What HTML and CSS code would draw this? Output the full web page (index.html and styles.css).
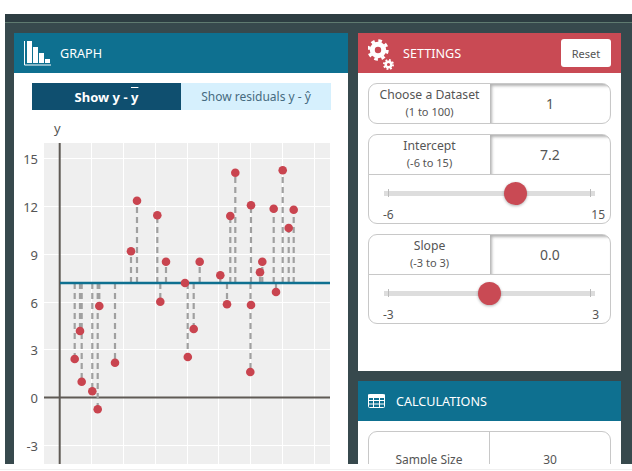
FILE: index.html
```html
<!DOCTYPE html>
<html lang="en">
<head>
    <meta charset="UTF-8">
    <meta name="viewport" content="width=device-width, initial-scale=1.0">
    <title>Regression Explorer</title>
    <link rel="stylesheet" href="styles.css">
</head>
<body>
    <div class="shell">
        <div class="topbar"></div>
        <div class="columns">
            <section class="panel graph-panel">
                <header class="panel-head">
                    <svg class="head-icon" width="27" height="25" viewBox="0 0 27 25">
                        <path d="M0.5 0V24H27" fill="none" stroke="#fff" stroke-width="1"/>
                        <rect x="3" y="0" width="5" height="22" fill="#fff"/>
                        <rect x="9" y="6" width="5" height="16" fill="#fff"/>
                        <rect x="15" y="12" width="5" height="10" fill="#fff"/>
                        <rect x="21" y="18" width="5" height="4" fill="#fff"/>
                    </svg>
                    <span class="panel-title">GRAPH</span>
                </header>
                <div class="toggle">
                    <div class="toggle-btn active">Show y - <span class="ybar">y</span></div>
                    <div class="toggle-btn">Show residuals y - ŷ</div>
                </div>
                <svg class="plot" width="334" height="349" viewBox="14 115 334 349">
                    <text class="axis-name" x="54" y="133">y</text>
                    <rect x="44" y="143" width="286" height="321" fill="#efefef"/>
                    <g class="grid">
                        <path d="M44 158.5H330M44 206.5H330M44 254.5H330M44 302.5H330M44 349.5H330M44 445.5H330"/>
                        <path d="M91.5 143V464M123.5 143V464M155.5 143V464M187.5 143V464M218.5 143V464M250.5 143V464M282.5 143V464M314.5 143V464"/>
                    </g>
                    <g class="ticks">
                        <text x="38" y="164">15</text>
                        <text x="38" y="212">12</text>
                        <text x="38" y="260">9</text>
                        <text x="38" y="308">6</text>
                        <text x="38" y="355">3</text>
                        <text x="38" y="403">0</text>
                        <text x="38" y="451">-3</text>
                    </g>
                    <path class="axis" d="M44 397.5H330M59.7 143V464"/>
                    <g class="resid">
                        <path d="M74.7 283V359M80 283V331M81.7 283V382M92.3 283V391M97.7 283V409M99.3 283V306M115 283V363"/>
                        <path d="M131 283V251M137 283V201M157.3 283V215M160.3 283V302M166 283V262M187.7 283V357M193.7 283V329"/>
                        <path d="M199.7 283V262M220.3 283V275M227 283V304M230.3 283V216M235.3 283V173M251 283V205M250.5 283V372"/>
                        <path d="M260 283V272M262.3 283V262M273.7 283V209M276 283V292M282.7 283V170M288.7 283V228M293.7 283V210"/>
                    </g>
                    <path class="mean" d="M60 283H330"/>
                    <g class="points">
                        <circle cx="74.7" cy="359" r="4.3"/><circle cx="80" cy="331" r="4.3"/><circle cx="81.7" cy="381.7" r="4.3"/>
                        <circle cx="92.3" cy="391.3" r="4.3"/><circle cx="97.7" cy="409.3" r="4.3"/><circle cx="99.3" cy="306" r="4.3"/>
                        <circle cx="115" cy="362.7" r="4.3"/><circle cx="131" cy="251.3" r="4.3"/><circle cx="137" cy="200.7" r="4.3"/>
                        <circle cx="157.3" cy="215.3" r="4.3"/><circle cx="160.3" cy="301.7" r="4.3"/><circle cx="166" cy="261.7" r="4.3"/>
                        <circle cx="185" cy="283" r="4.3"/><circle cx="187.8" cy="357" r="4.3"/><circle cx="193.7" cy="329" r="4.3"/>
                        <circle cx="199.7" cy="261.7" r="4.3"/><circle cx="220.3" cy="275.3" r="4.3"/><circle cx="227" cy="304.3" r="4.3"/>
                        <circle cx="230.3" cy="216" r="4.3"/><circle cx="235.3" cy="172.7" r="4.3"/><circle cx="251" cy="205.3" r="4.3"/>
                        <circle cx="251" cy="305" r="4.3"/><circle cx="250.3" cy="372" r="4.3"/><circle cx="260" cy="272.3" r="4.3"/>
                        <circle cx="262.3" cy="261.7" r="4.3"/><circle cx="273.7" cy="208.7" r="4.3"/><circle cx="276" cy="292" r="4.3"/>
                        <circle cx="282.7" cy="170.3" r="4.3"/><circle cx="288.7" cy="228" r="4.3"/><circle cx="293.7" cy="209.7" r="4.3"/>
                    </g>
                </svg>
            </section>

            <div class="side">
                <section class="panel settings-panel">
                    <header class="panel-head red">
                        <svg class="head-icon gears" width="30" height="32" viewBox="0 0 30 32">
                            <g fill="none" stroke="#fff">
                                <circle cx="10" cy="11" r="5.7" stroke-width="5"/>
                                <circle cx="10" cy="11" r="9.2" stroke-width="3" stroke-dasharray="3.6 3.63"/>
                                <circle cx="20.5" cy="25.5" r="2.8" stroke-width="2.4"/>
                                <circle cx="20.5" cy="25.5" r="4.6" stroke-width="1.8" stroke-dasharray="1.8 1.81"/>
                            </g>
                        </svg>
                        <span class="panel-title">SETTINGS</span>
                        <button class="reset">Reset</button>
                    </header>
                    <div class="panel-body">
                        <div class="card">
                            <div class="card-row">
                                <div class="card-label">Choose a Dataset<small>(1 to 100)</small></div>
                                <div class="card-value">1</div>
                            </div>
                        </div>
                        <div class="card">
                            <div class="card-row">
                                <div class="card-label">Intercept<small>(-6 to 15)</small></div>
                                <div class="card-value">7.2</div>
                            </div>
                            <div class="slider">
                                <div class="track"><div class="thumb" style="left: 62.9%"></div></div>
                                <div class="limits"><span>-6</span><span>15</span></div>
                            </div>
                        </div>
                        <div class="card">
                            <div class="card-row">
                                <div class="card-label">Slope<small>(-3 to 3)</small></div>
                                <div class="card-value">0.0</div>
                            </div>
                            <div class="slider">
                                <div class="track"><div class="thumb" style="left: 50%"></div></div>
                                <div class="limits"><span>-3</span><span class="limit-narrow">3</span></div>
                            </div>
                        </div>
                    </div>
                </section>

                <section class="panel">
                    <header class="panel-head">
                        <svg class="head-icon table-icon" width="17" height="14" viewBox="0 0 17 14">
                            <path d="M0.5 1.5a1 1 0 0 1 1-1h14a1 1 0 0 1 1 1v11a1 1 0 0 1-1 1h-14a1 1 0 0 1-1-1z" fill="none" stroke="#fff"/>
                            <path d="M0 0.5H17V4H0z" fill="#fff"/>
                            <path d="M0 6.5H17M0 10H17M5.5 4V14M11.5 4V14" stroke="#fff"/>
                        </svg>
                        <span class="panel-title">CALCULATIONS</span>
                    </header>
                    <div class="panel-body">
                        <div class="card calc-card">
                            <div class="calc-label">Sample Size</div>
                            <div class="calc-value">30</div>
                        </div>
                    </div>
                </section>
            </div>
        </div>
    </div>
    <div class="page-foot"></div>
</body>
</html>
```

FILE: styles.css
```css
html, body {
    height: 100%;
}
body {
    margin: 0;
    padding-top: 14px;
    box-sizing: border-box;
    background: white;
    display: flex;
    flex-direction: column;
    overflow: hidden;
    font-family: "Noto Sans", Arial, sans-serif;
    font-size: 12px;
    color: #555;
}
.shell {
    flex: 1;
    min-height: 0;
    margin-left: 5px;
    background: #37494d;
    overflow: hidden;
}
.topbar {
    height: 8px;
    background: #2d3d42;
    border-bottom: 1px solid #5f7a70;
}
.columns {
    display: grid;
    grid-template-columns: 334px 263px;
    gap: 10px;
    padding: 10px 0 0 9px;
    align-items: start;
}
.page-foot {
    height: 5px;
    margin-bottom: 1px;
    border-bottom: 1px solid #f0f0f0;
}
.panel {
    background: white;
}
.graph-panel {
    height: 431px;
}
.panel-head {
    height: 40px;
    background: #0e7090;
    display: flex;
    align-items: center;
    color: white;
    padding: 0 10px;
}
.panel-head.red {
    background: #c94a54;
}
.panel-title {
    font-size: 12.6px;
    margin-left: 9px;
}
.head-icon {
    flex: none;
}
.gears {
    margin-top: 3px;
    margin-left: 0;
    margin-right: -4px;
}
.table-icon {
    margin-right: 2px;
}
.reset {
    margin-left: auto;
    width: 50px;
    height: 28px;
    padding: 0;
    background: white;
    border: none;
    border-radius: 3px;
    font: inherit;
    font-size: 11px;
    color: #555;
    cursor: pointer;
}
.toggle {
    display: flex;
    margin: 10px 17px 0 18px;
    height: 27px;
    font-size: 12px;
}
.toggle-btn {
    width: 150px;
    display: flex;
    align-items: center;
    justify-content: center;
    background: #d6f0fd;
    color: #466b80;
    white-space: pre;
}
.toggle-btn.active {
    width: 149px;
    background: #0f4f6f;
    color: white;
    font-weight: bold;
    font-size: 13px;
}
.ybar {
    text-decoration: overline;
}
.plot {
    display: block;
    margin-top: 5px;
}
.plot text {
    font-size: 13px;
    fill: #555;
}
.ticks text {
    text-anchor: end;
}
.grid path {
    fill: none;
    stroke: white;
    stroke-width: 1;
}
.axis {
    fill: none;
    stroke: #5f5a55;
    stroke-width: 2;
}
.resid path {
    fill: none;
    stroke: #a0a0a0;
    stroke-width: 2.2;
    stroke-dasharray: 6 4;
}
.mean {
    fill: none;
    stroke: #0e7090;
    stroke-width: 2.4;
}
.points circle {
    fill: #c9444f;
}
.side {
    display: flex;
    flex-direction: column;
    gap: 10px;
}
.settings-panel {
    height: 338px;
}
.panel-body {
    padding: 10px;
    display: flex;
    flex-direction: column;
    gap: 10px;
}
.card {
    border: 1px solid #c8c8c8;
    border-radius: 9px;
    overflow: hidden;
}
.card-row {
    display: flex;
    height: 39px;
}
.card-label {
    width: 121px;
    text-align: center;
    font-size: 12.2px;
    line-height: 17px;
    padding-top: 2px;
}
.card-label small {
    display: block;
    font-size: 11px;
}
.card-value {
    flex: 1;
    display: flex;
    align-items: center;
    justify-content: center;
    font-size: 14px;
    box-shadow: inset 2px 2px 3px rgba(0, 0, 0, 0.3);
}
.slider {
    border-top: 1px solid #c8c8c8;
    height: 49px;
    padding: 16px 15px 0;
    box-sizing: border-box;
}
.track {
    position: relative;
    height: 5px;
    margin: 0 4px;
    background: #ddd;
    box-shadow: -4px 0 0 #ddd, 4px 0 0 #ddd;
}
.track::before, .track::after {
    content: "";
    position: absolute;
    top: -2px;
    width: 1px;
    height: 8px;
    background: #bbb;
}
.track::before { left: 0; }
.track::after { right: 0; }
.thumb {
    position: absolute;
    top: -9px;
    width: 23px;
    height: 23px;
    margin-left: -12px;
    border-radius: 50%;
    background: #c94a54;
    box-shadow: 0 1px 3px rgba(0, 0, 0, 0.3);
}
.limits {
    display: flex;
    justify-content: space-between;
    margin: 10px -10px 0 -1px;
    font-size: 12px;
}
.limit-narrow {
    margin-right: 6px;
}
.calc-card {
    display: flex;
    height: 60px;
    font-size: 12px;
}
.calc-label, .calc-value {
    flex: 1;
    text-align: center;
    padding-top: 19px;
}
.calc-label {
    border-right: 1px solid #c8c8c8;
}
```
